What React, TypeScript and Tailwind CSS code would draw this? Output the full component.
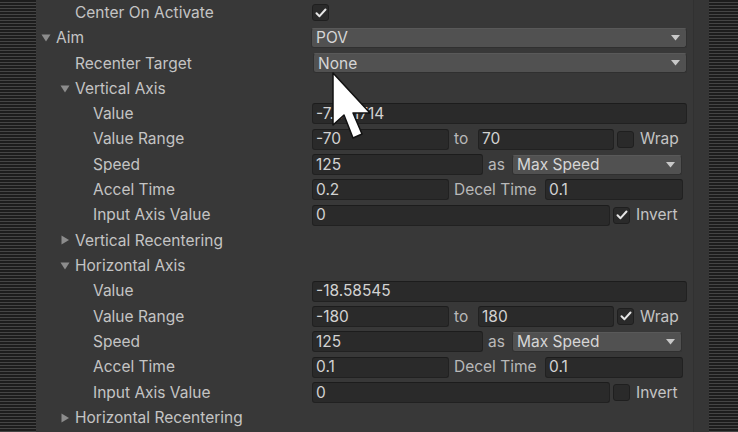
import React from "react";

const stripes =
  "bg-[repeating-linear-gradient(to_bottom,#1d1d1d_0px,#1d1d1d_2px,#454545_2px,#454545_3px)]";

function Tri({ open }: { open: boolean }) {
  return (
    <span className="w-[15px] h-full flex items-center shrink-0">
      {open ? (
        <svg width="10" height="8" viewBox="0 0 10 8">
          <path d="M0.5 0.5 L9.5 0.5 L5 7.5 Z" fill="#8c8c8c" />
        </svg>
      ) : (
        <svg width="9" height="10" viewBox="0 0 9 10" className="ml-[1px]">
          <path d="M0.5 0.5 L8 5 L0.5 9.5 Z" fill="#8c8c8c" />
        </svg>
      )}
    </span>
  );
}

function Row({
  level,
  fold,
  label,
  children,
}: {
  level: number;
  fold?: "open" | "closed";
  label: string;
  children?: React.ReactNode;
}) {
  const starts = [20, 39, 57];
  const textStart = starts[level];
  return (
    <div className="h-[25.32px] flex items-center">
      <div
        className="w-[276px] shrink-0 h-full flex items-center text-[#c4c4c4]"
        style={{ paddingLeft: fold ? textStart - 15 : textStart }}
      >
        {fold && <Tri open={fold === "open"} />}
        <span className="whitespace-nowrap">{label}</span>
      </div>
      <div className="flex-1 h-full flex items-center pr-[6px]">{children}</div>
    </div>
  );
}

function Field({ value, w, cls = "" }: { value: string; w?: number; cls?: string }) {
  return (
    <div
      className={
        "h-[21px] rounded-[3px] bg-[#2a2a2a] border border-[#212121] border-t-[#1c1c1c] pl-[3px] flex items-center text-[#d2d2d2] whitespace-nowrap overflow-hidden shrink-0 " +
        cls
      }
      style={w ? { width: w } : undefined}
    >
      {value}
    </div>
  );
}

function Dropdown({ value, w, cls = "" }: { value: string; w?: number; cls?: string }) {
  return (
    <div
      className={
        "h-[20px] rounded-[3px] bg-[#515151] border border-[#303030] border-t-[#595959] pl-[4px] pr-[6px] flex items-center justify-between text-[#d6d6d6] shrink-0 " +
        cls
      }
      style={w ? { width: w } : undefined}
    >
      <span>{value}</span>
      <svg width="9" height="6" viewBox="0 0 9 6">
        <path d="M0 0 L9 0 L4.5 5.5 Z" fill="#c8c8c8" />
      </svg>
    </div>
  );
}

function Check({ checked, cls = "" }: { checked: boolean; cls?: string }) {
  return (
    <div
      className={
        "w-[17px] h-[17px] rounded-[3px] bg-[#2a2a2a] border border-[#1f1f1f] flex items-center justify-center shrink-0 " +
        cls
      }
    >
      {checked && (
        <svg width="12" height="10" viewBox="0 0 12 10">
          <path
            d="M1.5 5.2 L4.5 8.2 L10.5 1.5"
            stroke="#e6e6e6"
            strokeWidth="2"
            fill="none"
            strokeLinecap="round"
            strokeLinejoin="round"
          />
        </svg>
      )}
    </div>
  );
}

function Txt({ children, w }: { children: React.ReactNode; w: number }) {
  return (
    <span className="pl-[5px] text-[#b8b8b8] whitespace-nowrap shrink-0" style={{ width: w }}>
      {children}
    </span>
  );
}

function AxisRows({
  value,
  min,
  max,
  wrap,
  accel,
  invert,
}: {
  value: string;
  min: string;
  max: string;
  wrap: boolean;
  accel: string;
  invert: boolean;
}) {
  return (
    <>
      <Row level={2} label="Value">
        <Field value={value} cls="flex-1" />
      </Row>
      <Row level={2} label="Value Range">
        <Field value={min} w={137} />
        <Txt w={29}>to</Txt>
        <Field value={max} w={136} />
        <Check checked={wrap} cls="ml-[3px]" />
        <span className="ml-[6px] text-[#c4c4c4]">Wrap</span>
      </Row>
      <Row level={2} label="Speed">
        <Field value="125" w={171} />
        <Txt w={29}>as</Txt>
        <Dropdown value="Max Speed" w={170} />
      </Row>
      <Row level={2} label="Accel Time">
        <Field value={accel} w={137} />
        <Txt w={96}>Decel Time</Txt>
        <Field value="0.1" w={138} />
      </Row>
      <Row level={2} label="Input Axis Value">
        <Field value="0" w={298} />
        <Check checked={invert} cls="ml-[3px]" />
        <span className="ml-[6px] text-[#c4c4c4]">Invert</span>
      </Row>
    </>
  );
}

export default function App() {
  return (
    <div
      className="w-[738px] h-[432px] flex overflow-hidden relative text-[15.5px] leading-none"
      style={{ fontFamily: "Inter, 'Noto Sans', sans-serif" }}
    >
      <div className={"w-[36px] shrink-0 h-full " + stripes} />
      <div className="w-[657px] shrink-0 h-full bg-[#383838] flex flex-col">
        <div className="flex flex-col">
          <Row level={1} label="Center On Activate">
            <Check checked={true} />
          </Row>
          <Row level={0} fold="open" label="Aim">
            <Dropdown value="POV" cls="flex-1 -ml-[1px]" />
          </Row>
          <Row level={1} label="Recenter Target">
            <Dropdown value="None" cls="flex-1 ml-[1px]" />
          </Row>
          <Row level={1} fold="open" label="Vertical Axis" />
          <AxisRows value="-7.881714" min="-70" max="70" wrap={false} accel="0.2" invert={true} />
          <Row level={1} fold="closed" label="Vertical Recentering" />
          <Row level={1} fold="open" label="Horizontal Axis" />
          <AxisRows value="-18.58545" min="-180" max="180" wrap={true} accel="0.1" invert={false} />
          <Row level={1} fold="closed" label="Horizontal Recentering" />
        </div>
      </div>
      <div className="w-[16px] shrink-0 h-full bg-[#363636] border-l border-[#313131]" />
      <div className={"flex-1 h-full " + stripes} />
      <svg
        className="absolute left-[330px] top-[71px]"
        width="44"
        height="72"
        viewBox="0 0 44 72"
      >
        <path
          d="M3 2 L3 54 L14 44 L23 67 L32 63 L23 42 L40 42 Z"
          fill="#ffffff"
          stroke="#111111"
          strokeWidth="1.5"
          strokeLinejoin="round"
        />
      </svg>
    </div>
  );
}
